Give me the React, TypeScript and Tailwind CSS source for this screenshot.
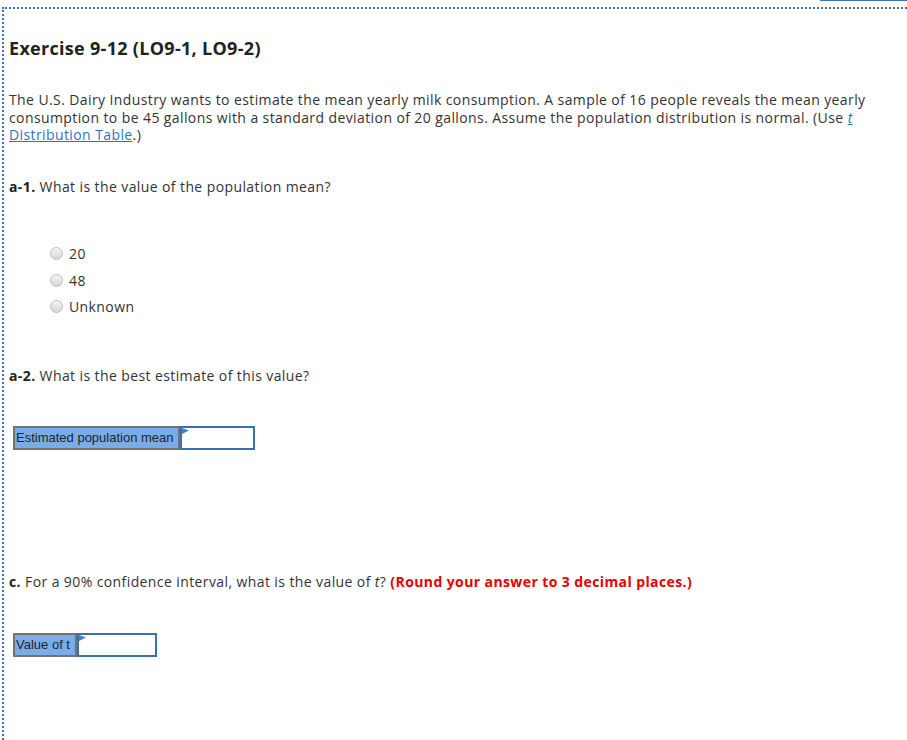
import React from "react";

const font = { fontFamily: "'Open Sans', Lato, Arial, sans-serif" };

function Radio({ label }: { label: string }) {
  return (
    <label className="flex h-[26.5px] items-center gap-[6px] text-[14px] tracking-[0.4px] text-[#333]">
      <span className="h-[13px] w-[13px] shrink-0 rounded-full border border-[#bdbdbd] bg-gradient-to-b from-[#f4f4f4] to-[#d6d6d6]" />
      <span>{label}</span>
    </label>
  );
}

function AnswerField({ label, labelWidth, inputWidth }: { label: string; labelWidth: string; inputWidth: string }) {
  return (
    <div className="ml-[4px] flex h-[24px] items-stretch">
      <span
        className={`flex items-center whitespace-nowrap border-2 border-[#727272] bg-[#78ade7] pl-[1px] text-[13px] text-[#1d2433] ${labelWidth}`}
        style={{ fontFamily: "'Liberation Sans', Arial, sans-serif" }}
      >
        {label}
      </span>
      <span className={`relative border-2 border-[#3a6fb3] bg-white ${inputWidth}`}>
        <svg className="absolute left-[0px] top-[0px]" width="7" height="6" viewBox="0 0 7 6">
          <path d="M0 0 L7 2.5 L0 6 Z" fill="#3f7fd0" />
        </svg>
      </span>
    </div>
  );
}

export default function App() {
  return (
    <div className="h-[740px] w-[907px] overflow-hidden bg-white" style={font}>
      <div className="flex h-[7px] justify-end">
        <div className="h-px w-[87px] bg-[#3b73b9]" />
      </div>
      <div className="ml-[2px] min-h-[733px] border-l-2 border-t-2 border-dotted border-[#3b73b9] pl-[5px]">
        <h1 className="mt-[28px] text-[18px] font-bold leading-[22px] tracking-[0.3px] text-[#222]">
          Exercise 9-12 (LO9-1, LO9-2)
        </h1>

        <p className="mt-[32px] w-[885px] text-[14px] leading-[17.5px] tracking-[0.4px] text-[#333]">
          The U.S. Dairy Industry wants to estimate the mean yearly milk consumption. A sample of 16 people reveals the mean yearly
          consumption to be 45 gallons with a standard deviation of 20 gallons. Assume the population distribution is normal. (Use{" "}
          <a className="italic text-[#2f72c4] underline">t</a>{" "}
          <a className="text-[#2f72c4] underline">Distribution Table</a>.)
        </p>

        <p className="mt-[34.5px] text-[14px] leading-[17.5px] tracking-[0.4px] text-[#333]">
          <b className="font-bold text-[#222]">a-1.</b> What is the value of the population mean?
        </p>

        <div className="ml-[41px] mt-[45px] flex flex-col">
          <Radio label="20" />
          <Radio label="48" />
          <Radio label="Unknown" />
        </div>

        <p className="mt-[47px] text-[14px] leading-[17.5px] tracking-[0.4px] text-[#333]">
          <b className="font-bold text-[#222]">a-2.</b> What is the best estimate of this value?
        </p>

        <div className="mt-[41.25px]">
          <AnswerField label="Estimated population mean" labelWidth="w-[167px]" inputWidth="w-[75px]" />
        </div>

        <p className="mt-[123.25px] text-[14px] leading-[17.5px] tracking-[0.4px] text-[#333]">
          <b className="font-bold text-[#222]">c.</b> For a 90% confidence interval, what is the value of <i>t</i>?{" "}
          <b className="font-bold text-[#e60000]">(Round your answer to 3 decimal places.)</b>
        </p>

        <div className="mt-[42.25px]">
          <AnswerField label="Value of t" labelWidth="w-[64px]" inputWidth="w-[80px]" />
        </div>
      </div>
    </div>
  );
}
